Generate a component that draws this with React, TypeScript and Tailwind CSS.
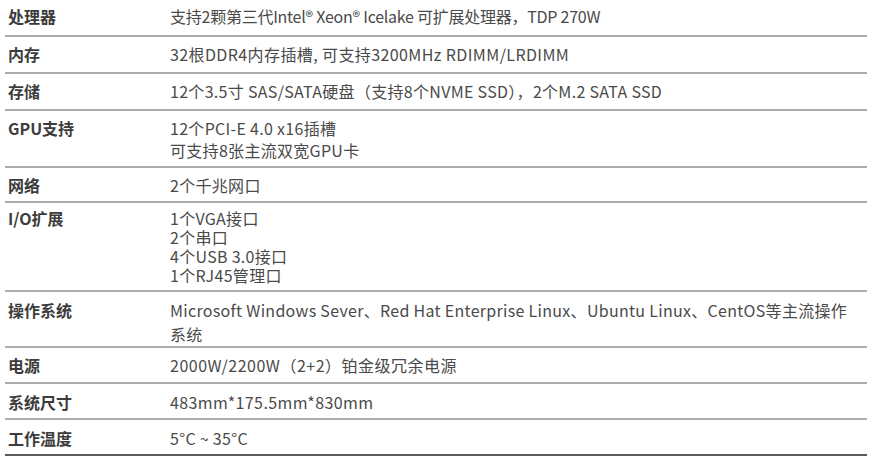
const specs: { label: string; lines: string[]; row: string; lh: string; track?: string }[] = [
  { label: '处理器', lines: ['支持2颗第三代Intel® Xeon® Icelake 可扩展处理器，TDP 270W'], row: 'pt-[5px] pb-[8px]', lh: 'leading-[22px]', track: 'tracking-[-0.25px]' },
  { label: '内存', lines: ['32根DDR4内存插槽, 可支持3200MHz RDIMM/LRDIMM'], row: 'pt-[6px] pb-[7px]', lh: 'leading-[22px]', track: 'tracking-[0.4px]' },
  { label: '存储', lines: ['12个3.5寸 SAS/SATA硬盘（支持8个NVME SSD），2个M.2 SATA SSD'], row: 'pt-[6px] pb-[7px]', lh: 'leading-[22px]' },
  { label: 'GPU支持', lines: ['12个PCI-E 4.0 x16插槽', '可支持8张主流双宽GPU卡'], row: 'pt-[6px] pb-[5px]', lh: 'leading-[22px]' },
  { label: '网络', lines: ['2个千兆网口'], row: 'pt-[6px] pb-[5px]', lh: 'leading-[22px]' },
  { label: 'I/O扩展', lines: ['1个VGA接口', '2个串口', '4个USB 3.0接口', '1个RJ45管理口'], row: 'pt-[6px] pb-[5px]', lh: 'leading-[19px]' },
  {
    label: '操作系统',
    lines: ['Microsoft Windows Sever、Red Hat Enterprise Linux、Ubuntu Linux、CentOS等主流操作', '系统'],
    row: 'pt-[6px] pb-0',
    lh: 'leading-[24px]',
  },
  { label: '电源', lines: ['2000W/2200W（2+2）铂金级冗余电源'], row: 'pt-[6px] pb-[6px]', lh: 'leading-[22px]', track: 'tracking-[0.5px]' },
  { label: '系统尺寸', lines: ['483mm*175.5mm*830mm'], row: 'pt-[7px] pb-[5px]', lh: 'leading-[22px]', track: 'tracking-[0.4px]' },
  { label: '工作温度', lines: ['5°C ~ 35°C'], row: 'pt-[7px] pb-[5px]', lh: 'leading-[22px]' },
];

export default function App() {
  return (
    <div className="w-[875px] h-[461px] bg-white overflow-hidden font-['Noto_Sans_CJK_SC',sans-serif]">
      <div className="ml-[5px] w-[862px] flex flex-col">
        {specs.map((s, i) => (
          <div
            key={s.label}
            className={`flex border-b-2 ${i === specs.length - 1 ? 'border-[#5a5a5a]' : 'border-[#ababab]'} ${s.row}`}
          >
            <div className={`w-[165px] shrink-0 pl-[3px] text-[16px] font-bold text-[#3c3c3c] ${s.lh}`}>{s.label}</div>
            <div className={`flex-1 text-[16px] text-[#4a4a4a] ${s.track ?? 'tracking-[0.3px]'} ${s.lh}`}>
              {s.lines.map((l) => (
                <div key={l} className="whitespace-nowrap">{l}</div>
              ))}
            </div>
          </div>
        ))}
      </div>
    </div>
  );
}
